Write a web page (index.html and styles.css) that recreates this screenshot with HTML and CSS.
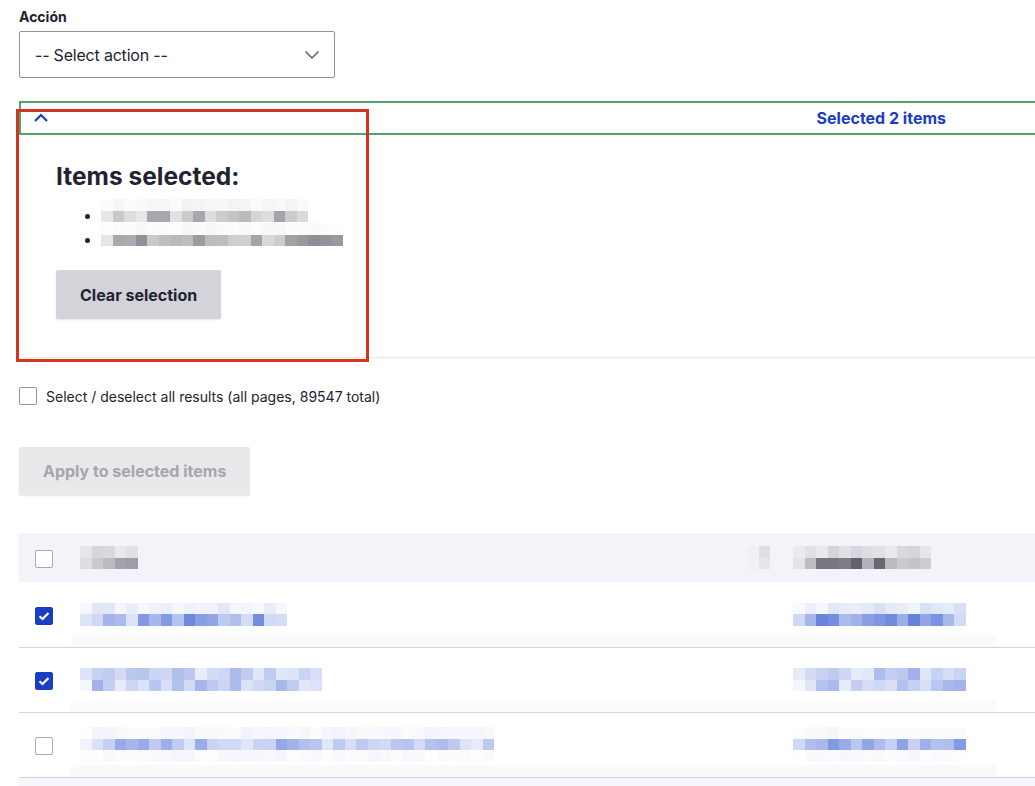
FILE: index.html
```html
<!DOCTYPE html>
<html lang="es">
<head>
  <meta charset="UTF-8" />
  <title>Acciones masivas</title>
  <link rel="stylesheet" href="styles.css">
</head>
<body>

<div class="page">
  <label class="form-label" for="action">Acción</label>
  <div class="select-wrap">
    <select id="action" class="form-select">
      <option>-- Select action --</option>
    </select>
    <svg class="select-arrow" width="16" height="10" viewBox="0 0 16 10"><path d="M1.5 1.5l6.5 6.5 6.5-6.5" fill="none" stroke="#55565b" stroke-width="1.4"/></svg>
  </div>

  <div class="vbo-details">
    <div class="vbo-summary">
      <svg width="16" height="10" viewBox="0 0 16 10"><path d="M2 8l6-6 6 6" fill="none" stroke="#1b3cc4" stroke-width="2.2"/></svg>
      <span class="vbo-count">Selected 2 items</span>
    </div>
    <div class="vbo-content">
      <h2>Items selected:</h2>
      <ul class="vbo-list">
        <li><span class="pix" data-w="18" data-rows="0.05,0.32" data-c="gray"></span></li>
        <li><span class="pix" data-w="21" data-rows="0.03,0.4" data-c="gray"></span></li>
      </ul>
      <button class="btn">Clear selection</button>
    </div>
  </div>

  <div class="check-row">
    <span class="checkbox"></span>
    <span>Select / deselect all results (all pages, 89547 total)</span>
  </div>

  <button class="btn btn-disabled">Apply to selected items</button>

  <table class="results">
    <thead>
      <tr>
        <th class="col-check"><span class="checkbox"></span></th>
        <th class="col-title"><div class="th-inner"><span class="pix" data-w="5" data-rows="0.15,0.4" data-c="gray"></span><span class="pix" data-w="2" data-rows="0.08,0.1" data-c="gray"></span></div></th>
        <th class="col-mid"><span class="pix" data-w="12" data-rows="0.12,0.6" data-c="gray"></span></th>
        <th class="col-end"></th>
      </tr>
    </thead>
    <tbody>
      <tr>
        <td class="col-check"><span class="checkbox checked"><svg width="18" height="18" viewBox="0 0 18 18"><path d="M4.5 9.2l3 2.8 6-6" fill="none" stroke="#fff" stroke-width="2.2"/></svg></span></td>
        <td class="col-title"><span class="pix" data-w="18" data-rows="0.1,0.45" data-c="blue"></span></td>
        <td class="col-mid"><span class="pix" data-w="15" data-rows="0.12,0.45" data-c="blue"></span></td>
        <td class="col-end"></td>
      </tr>
      <tr>
        <td class="col-check"><span class="checkbox checked"><svg width="18" height="18" viewBox="0 0 18 18"><path d="M4.5 9.2l3 2.8 6-6" fill="none" stroke="#fff" stroke-width="2.2"/></svg></span></td>
        <td class="col-title"><span class="pix" data-w="21" data-rows="0.25,0.28" data-c="blue"></span></td>
        <td class="col-mid"><span class="pix" data-w="15" data-rows="0.3,0.28" data-c="blue"></span></td>
        <td class="col-end"></td>
      </tr>
      <tr>
        <td class="col-check"><span class="checkbox"></span></td>
        <td class="col-title"><span class="pix" data-w="36" data-rows="0.04,0.32,0.03" data-c="blue"></span></td>
        <td class="col-mid"><span class="pix" data-w="15" data-rows="0.03,0.4,0.03" data-c="blue"></span></td>
        <td class="col-end"></td>
      </tr>
      <tr class="row-next">
        <td colspan="4"></td>
      </tr>
    </tbody>
  </table>

  <div class="highlight"></div>
</div>

<script>
// blurred content: blocks of pixels
let seed = 7;
function rand() {
  seed = (seed * 9301 + 49297) % 233280;
  return seed / 233280;
}
const colors = { gray: "70, 70, 80", blue: "35, 75, 205" };

document.querySelectorAll(".pix").forEach(el => {
  const w = parseInt(el.dataset.w);
  const rows = el.dataset.rows.split(",").map(Number);
  const rgb = colors[el.dataset.c];
  el.style.gridTemplateColumns = `repeat(${w}, 11.5px)`;
  rows.forEach(base => {
    for (let i = 0; i < w; i++) {
      const cell = document.createElement("i");
      let a = base * (0.35 + rand() * 1.2);
      if (i === 0) a *= 0.4;
      cell.style.background = `rgba(${rgb}, ${Math.min(a, 0.9).toFixed(3)})`;
      el.appendChild(cell);
    }
  });
});
</script>

</body>
</html>
```

FILE: styles.css
```css
body {
  margin: 0;
  font-family: Inter, "Noto Sans", sans-serif;
  color: #222330;
  background: #fff;
  overflow: hidden;
}
.page {
  position: relative;
  width: 1070px;
  padding: 8px 0 0 19px;
}
.form-label {
  display: block;
  font-size: 14px;
  font-weight: 700;
  line-height: 18px;
  margin-bottom: 5px;
}
.select-wrap {
  position: relative;
  width: 316px;
}
.form-select {
  appearance: none;
  width: 316px;
  height: 47px;
  padding: 0 40px 0 15px;
  font-family: inherit;
  font-size: 16px;
  letter-spacing: -0.2px;
  color: #222330;
  background: #fff;
  border: 1px solid #8e929c;
  border-radius: 2px;
}
.select-arrow {
  position: absolute;
  right: 15px;
  top: 19px;
}
.vbo-details {
  margin-top: 23px;
  background: #fff;
  box-shadow: 0 1px 2px rgba(0, 0, 0, 0.12);
}
.vbo-summary {
  display: flex;
  align-items: center;
  height: 34px;
  box-sizing: border-box;
  border: 2px solid #55a26c;
  padding: 0 141px 0 12px;
}
.vbo-count {
  margin-left: auto;
  font-size: 16px;
  font-weight: 700;
  color: #1b3cc4;
}
.vbo-content {
  padding: 26px 0 38px 37px;
}
.vbo-content h2 {
  margin: 0;
  font-size: 24.5px;
  line-height: 30px;
  font-weight: 700;
}
.vbo-list {
  margin: 13px 0 18px;
  padding-left: 45px;
  font-size: 14px;
}
.vbo-list li {
  height: 24px;
  line-height: 24px;
}
.vbo-list .pix {
  vertical-align: top;
  margin-top: -5px;
}
.btn {
  display: block;
  height: 49px;
  padding: 0 24px;
  font-family: inherit;
  font-size: 16px;
  font-weight: 700;
  color: #222330;
  background: #d3d4d9;
  border: none;
  border-radius: 2px;
  box-shadow: 0 1px 2px rgba(0, 0, 0, 0.1);
}
.btn-disabled {
  height: 48px;
  margin-top: 42px;
  color: #a5a6ad;
  background: #e9e9eb;
}
.check-row {
  display: flex;
  align-items: center;
  gap: 9px;
  margin-top: 30px;
  height: 18px;
  font-size: 14px;
}
.checkbox {
  display: inline-block;
  width: 18px;
  height: 18px;
  box-sizing: border-box;
  border: 1px solid #8e929c;
  border-radius: 2px;
  background: #fff;
  vertical-align: middle;
}
.results .checkbox {
  border-color: #a9abb2;
}
.checkbox.checked {
  background: #1b3cc4;
  border-color: #1b3cc4;
  position: relative;
}
.checkbox.checked svg {
  position: absolute;
  left: -1px;
  top: -1px;
}
.results {
  margin-top: 38px;
  width: 1060px;
  border-collapse: collapse;
  table-layout: fixed;
}
.results th,
.results td {
  padding: 0 9px;
  text-align: left;
  vertical-align: middle;
}
.results thead tr {
  height: 49px;
  background: #f3f4f9;
}
.results tbody tr {
  height: 65px;
  border-bottom: 1px solid #d3d4d9;
}
.results .col-check {
  width: 52px;
  box-sizing: border-box;
  padding-left: 16px;
}
.results .col-title {
  width: 713px;
  box-sizing: border-box;
}
.results .col-mid {
  width: 212px;
  box-sizing: border-box;
}
.results tbody .col-title,
.results tbody .col-mid {
  background: linear-gradient(#fff calc(100% - 12px), #fafafb calc(100% - 12px));
}
.th-inner {
  display: flex;
  justify-content: space-between;
  padding-right: 5px;
}
.results .row-next {
  height: 20px;
  border: none;
  background: #f6f7fc;
}
.pix {
  display: inline-grid;
  grid-auto-rows: 11.5px;
  vertical-align: middle;
}
.pix i {
  display: block;
}
.highlight {
  position: absolute;
  left: 16px;
  top: 109px;
  width: 353px;
  height: 253px;
  box-sizing: border-box;
  border: 3px solid #d4331f;
  pointer-events: none;
}
```
